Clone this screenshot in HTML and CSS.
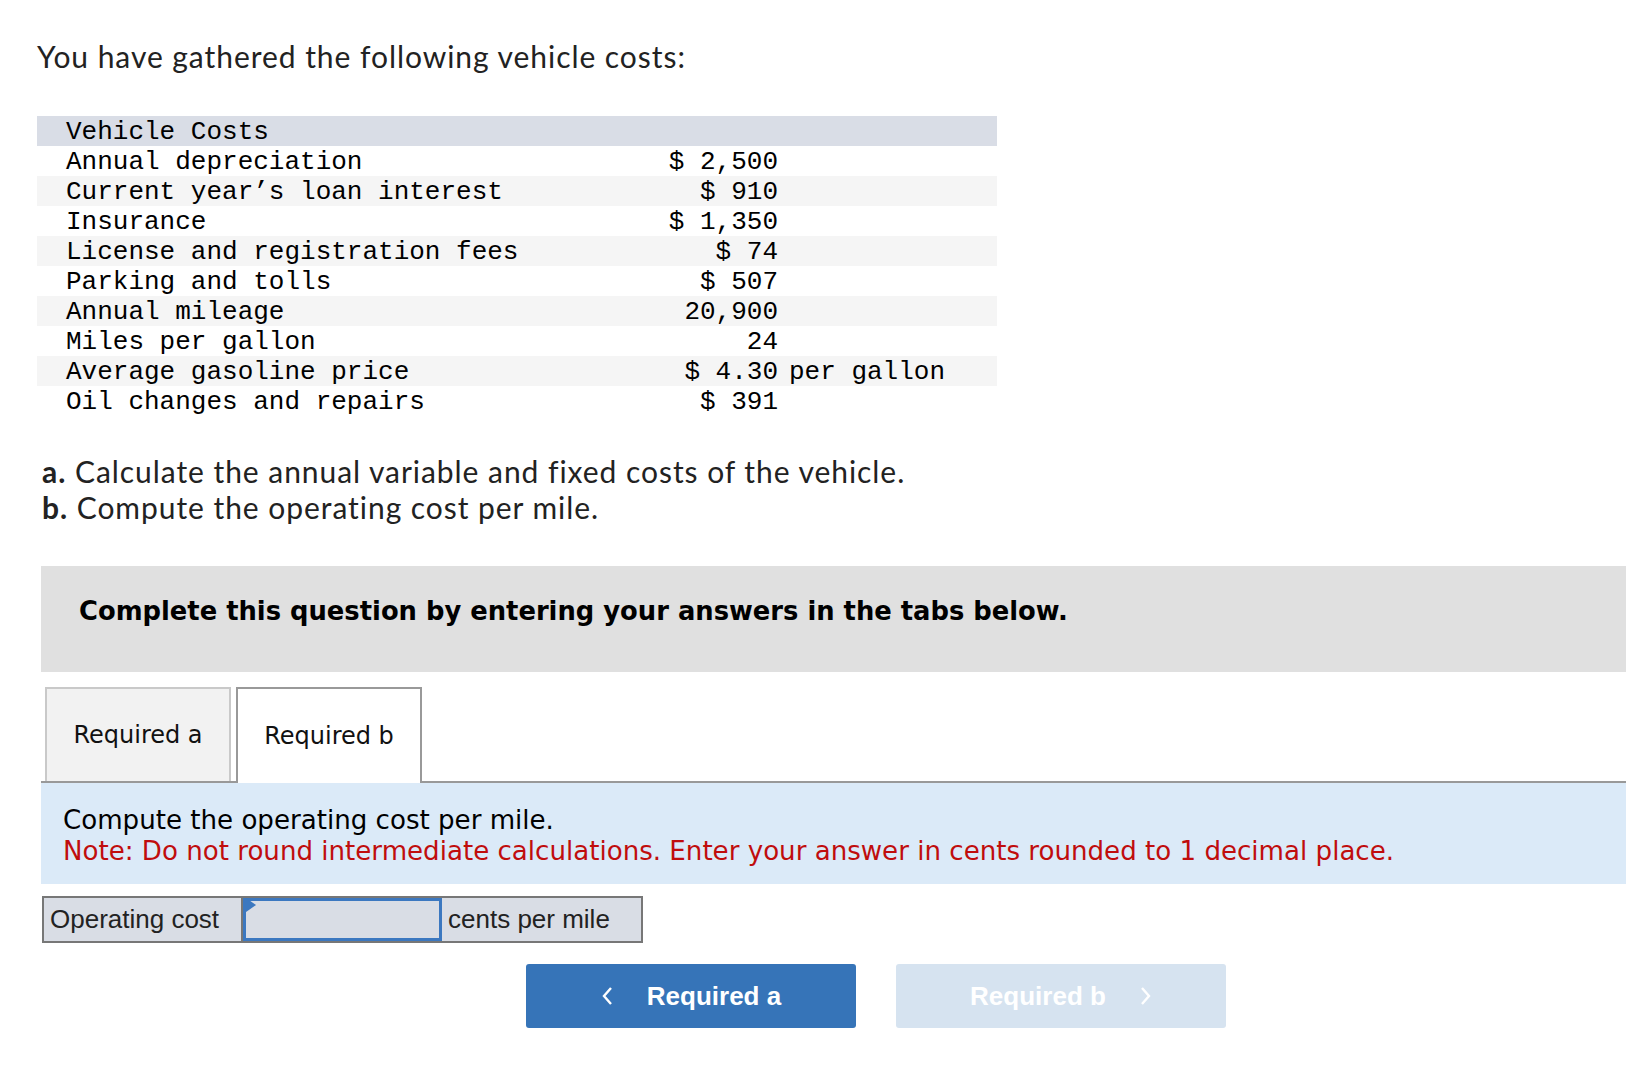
FILE: index.html
```html
<!DOCTYPE html>
<html>
<head>
<meta charset="utf-8">
<link rel="stylesheet" href="styles.css">
</head>
<body>
<div class="page">
  <p class="intro">You have gathered the following vehicle costs:</p>
  <table class="costs">
    <tr class="head"><td class="label">Vehicle Costs</td><td class="val"></td><td class="unit"></td></tr>
    <tr><td class="label">Annual depreciation</td><td class="val">$ 2,500</td><td class="unit"></td></tr>
    <tr class="alt"><td class="label">Current year’s loan interest</td><td class="val">$ 910</td><td class="unit"></td></tr>
    <tr><td class="label">Insurance</td><td class="val">$ 1,350</td><td class="unit"></td></tr>
    <tr class="alt"><td class="label">License and registration fees</td><td class="val">$ 74</td><td class="unit"></td></tr>
    <tr><td class="label">Parking and tolls</td><td class="val">$ 507</td><td class="unit"></td></tr>
    <tr class="alt"><td class="label">Annual mileage</td><td class="val">20,900</td><td class="unit"></td></tr>
    <tr><td class="label">Miles per gallon</td><td class="val">24</td><td class="unit"></td></tr>
    <tr class="alt"><td class="label">Average gasoline price</td><td class="val">$ 4.30</td><td class="unit">per gallon</td></tr>
    <tr><td class="label">Oil changes and repairs</td><td class="val">$ 391</td><td class="unit"></td></tr>
  </table>
  <div class="questions">
    <p><b>a.</b> Calculate the annual variable and fixed costs of the vehicle.</p>
    <p><b>b.</b> Compute the operating cost per mile.</p>
  </div>
  <div class="banner">Complete this question by entering your answers in the tabs below.</div>
  <div class="tabs">
    <div class="tab">Required a</div>
    <div class="tab active">Required b</div>
  </div>
  <div class="panel">
    <p class="prompt">Compute the operating cost per mile.</p>
    <p class="note">Note: Do not round intermediate calculations. Enter your answer in cents rounded to 1 decimal place.</p>
  </div>
  <div class="answer">
    <div class="cell">Operating cost</div>
    <div class="cell input"><span class="flag"></span></div>
    <div class="cell">cents per mile</div>
  </div>
  <div class="nav">
    <div class="btn prev"><span class="chev">
      <svg width="12" height="20" viewBox="0 0 12 20"><path d="M10 2 L3 10 L10 18" fill="none" stroke="#fff" stroke-width="2.4"/></svg>
    </span>Required a</div>
    <div class="btn next disabled">Required b<span class="chev">
      <svg width="12" height="20" viewBox="0 0 12 20"><path d="M2 2 L9 10 L2 18" fill="none" stroke="#fff" stroke-width="2.4"/></svg>
    </span></div>
  </div>
</div>
</body>
</html>
```
FILE: styles.css
```css
html, body { margin: 0; padding: 0; background: #fff; }
.page { padding: 38px 0 40px 37px; font-family: Lato, "Liberation Sans", sans-serif; color: #222; }
.intro { margin: 0; font-size: 30px; line-height: 36px; letter-spacing: 0.95px; }
.costs { margin-top: 42px; border-collapse: collapse; width: 960px; font-family: "Liberation Mono", monospace; font-size: 26px; color: #000; }
.costs td { padding: 3px 0 0 0; height: 27px; line-height: 27px; white-space: pre; }
.costs .label { width: 554px; padding-left: 29px; }
.costs .val { width: 158px; text-align: right; }
.costs .unit { padding-left: 11px; }
.costs .head { background: #d9dde6; }
.costs .alt { background: #f5f5f5; }
.questions { margin-top: 37px; padding-left: 5px; }
.questions p { margin: 0; font-size: 30px; line-height: 36px; letter-spacing: 0.95px; }
.banner { margin-top: 41px; margin-left: 4px; height: 106px; box-sizing: border-box; background: #e0e0e0; padding: 30px 0 0 38px; font-family: "DejaVu Sans", Verdana, sans-serif; font-weight: bold; font-size: 25.8px; line-height: 31px; color: #000; }
.tabs { margin-top: 15px; margin-left: 4px; display: flex; gap: 5px; border-bottom: 2px solid #999; padding-left: 4px; }
.tab { width: 186px; height: 94px; margin-bottom: -2px; box-sizing: border-box; border: 2px solid #c9c9c9; border-bottom: none; background: #f2f2f2; display: flex; align-items: center; justify-content: center; font-family: "DejaVu Sans", Verdana, sans-serif; font-size: 24px; color: #111; }
.tab.active { background: #fff; border-color: #999; height: 96px; }
.panel { margin-left: 4px; background: #dbeaf8; height: 101px; padding: 4px 0 0 22px; box-sizing: border-box; display: flex; flex-direction: column; justify-content: center; font-family: "DejaVu Sans", Verdana, sans-serif; font-size: 26.1px; }
.panel p { margin: 0; line-height: 31px; }
.prompt { color: #000; }
.note { color: #c00d0d; }
.answer { margin-top: 12px; margin-left: 5px; display: flex; border: 2px solid #777; width: 601px; height: 47px; box-sizing: border-box; background: #d9dde5; font-family: "Liberation Sans", Arial, sans-serif; font-size: 26px; color: #222; }
.cell { width: 200px; display: flex; align-items: center; padding-left: 6px; box-sizing: border-box; }
.cell:first-child { border-right: 2px solid #777; }
.cell.input { position: relative; border: 3px solid #3c78c0; }
.flag { position: absolute; left: 0; top: 0; width: 0; height: 0; border-top: 7px solid transparent; border-bottom: 7px solid transparent; border-left: 10px solid #3c78c0; top: -3px; }
.nav { margin-top: 21px; display: flex; gap: 40px; padding-left: 489px; }
.btn { width: 330px; height: 64px; border-radius: 3px; display: flex; align-items: center; justify-content: center; gap: 34px; font-family: "Liberation Sans", Arial, sans-serif; font-weight: bold; font-size: 26px; color: #fff; }
.btn.prev { background: #3674b8; }
.btn.disabled { background: #d6e3f0; }
.chev { display: flex; }
```
